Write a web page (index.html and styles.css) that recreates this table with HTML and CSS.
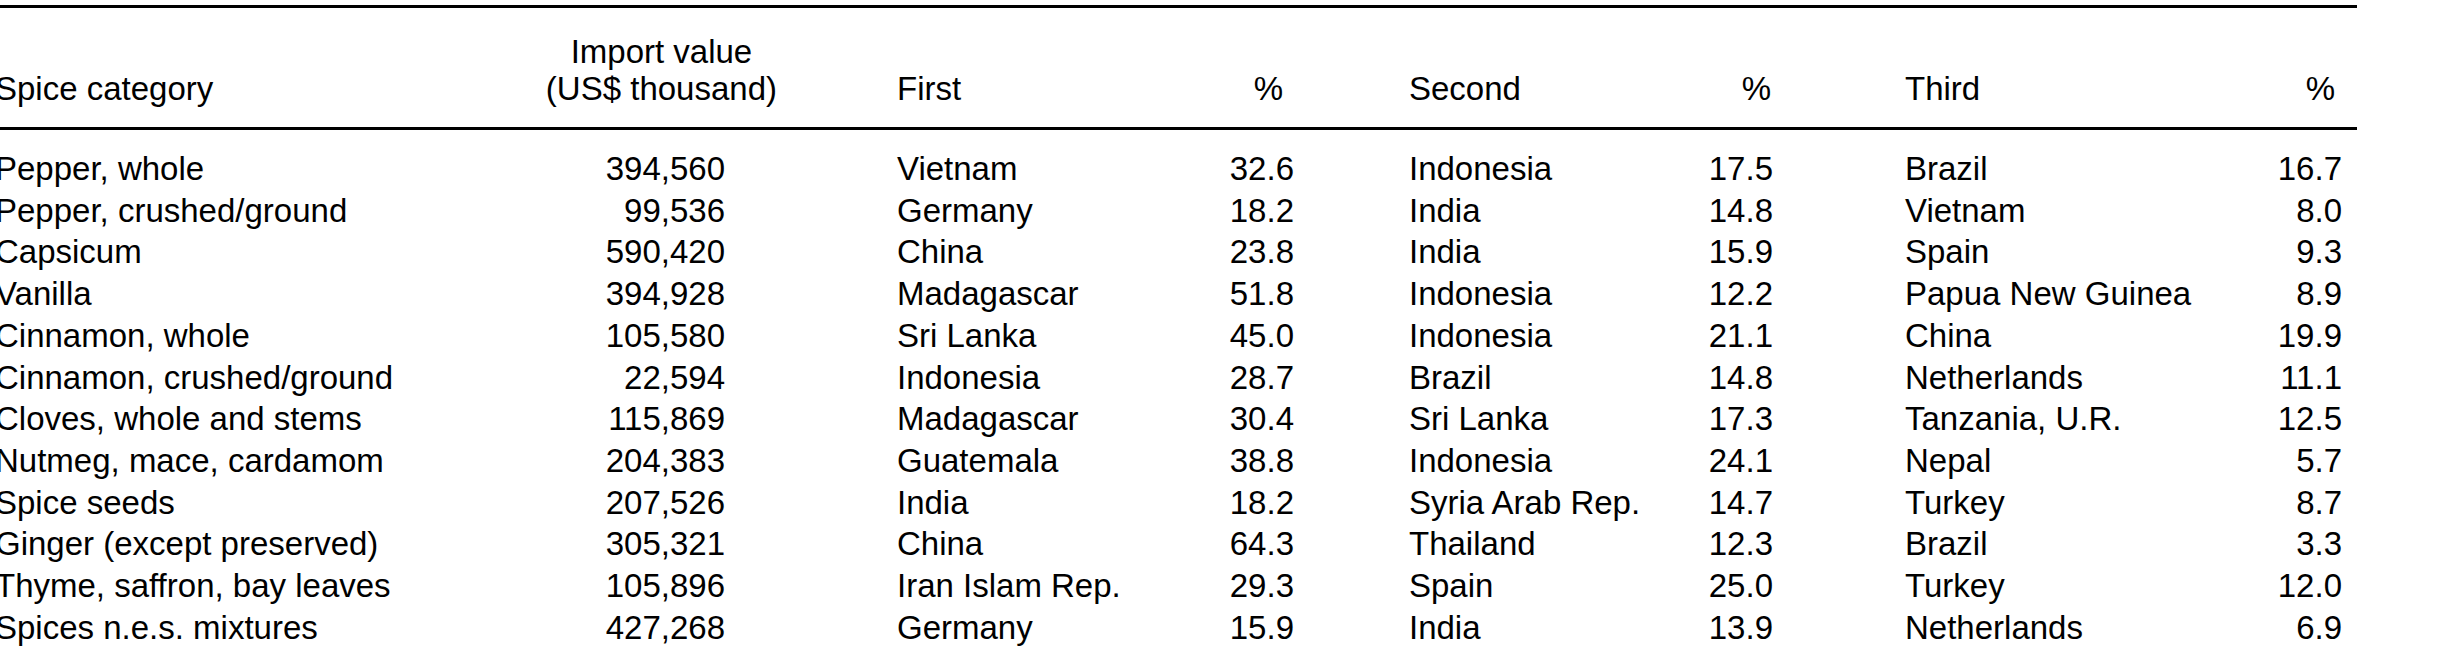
FILE: index.html
```html
<!DOCTYPE html>
<html lang="en">
<head>
<meta charset="utf-8">
<title>Spice imports</title>
<link rel="stylesheet" href="styles.css">
</head>
<body>
<table class="spice-table">
  <colgroup>
    <col class="c-cat"><col class="c-val"><col class="c-name1"><col class="c-pct1">
    <col class="c-name2"><col class="c-pct2"><col class="c-name3"><col class="c-pct3">
  </colgroup>
  <thead>
    <tr>
      <th class="cat">Spice category</th>
      <th class="val"><span class="val-head">Import value<br>(US$ thousand)</span></th>
      <th class="n1">First</th>
      <th class="p1">%</th>
      <th class="n2">Second</th>
      <th class="p2">%</th>
      <th class="n3">Third</th>
      <th class="p3">%</th>
    </tr>
  </thead>
  <tbody>
    <tr><td class="cat">Pepper, whole</td><td class="val">394,560</td><td class="n1">Vietnam</td><td class="p1">32.6</td><td class="n2">Indonesia</td><td class="p2">17.5</td><td class="n3">Brazil</td><td class="p3">16.7</td></tr>
    <tr><td class="cat">Pepper, crushed/ground</td><td class="val">99,536</td><td class="n1">Germany</td><td class="p1">18.2</td><td class="n2">India</td><td class="p2">14.8</td><td class="n3">Vietnam</td><td class="p3">8.0</td></tr>
    <tr><td class="cat">Capsicum</td><td class="val">590,420</td><td class="n1">China</td><td class="p1">23.8</td><td class="n2">India</td><td class="p2">15.9</td><td class="n3">Spain</td><td class="p3">9.3</td></tr>
    <tr><td class="cat">Vanilla</td><td class="val">394,928</td><td class="n1">Madagascar</td><td class="p1">51.8</td><td class="n2">Indonesia</td><td class="p2">12.2</td><td class="n3">Papua New Guinea</td><td class="p3">8.9</td></tr>
    <tr><td class="cat">Cinnamon, whole</td><td class="val">105,580</td><td class="n1">Sri Lanka</td><td class="p1">45.0</td><td class="n2">Indonesia</td><td class="p2">21.1</td><td class="n3">China</td><td class="p3">19.9</td></tr>
    <tr><td class="cat">Cinnamon, crushed/ground</td><td class="val">22,594</td><td class="n1">Indonesia</td><td class="p1">28.7</td><td class="n2">Brazil</td><td class="p2">14.8</td><td class="n3">Netherlands</td><td class="p3">11.1</td></tr>
    <tr><td class="cat">Cloves, whole and stems</td><td class="val">115,869</td><td class="n1">Madagascar</td><td class="p1">30.4</td><td class="n2">Sri Lanka</td><td class="p2">17.3</td><td class="n3">Tanzania, U.R.</td><td class="p3">12.5</td></tr>
    <tr><td class="cat">Nutmeg, mace, cardamom</td><td class="val">204,383</td><td class="n1">Guatemala</td><td class="p1">38.8</td><td class="n2">Indonesia</td><td class="p2">24.1</td><td class="n3">Nepal</td><td class="p3">5.7</td></tr>
    <tr><td class="cat">Spice seeds</td><td class="val">207,526</td><td class="n1">India</td><td class="p1">18.2</td><td class="n2">Syria Arab Rep.</td><td class="p2">14.7</td><td class="n3">Turkey</td><td class="p3">8.7</td></tr>
    <tr><td class="cat">Ginger (except preserved)</td><td class="val">305,321</td><td class="n1">China</td><td class="p1">64.3</td><td class="n2">Thailand</td><td class="p2">12.3</td><td class="n3">Brazil</td><td class="p3">3.3</td></tr>
    <tr><td class="cat">Thyme, saffron, bay leaves</td><td class="val">105,896</td><td class="n1">Iran Islam Rep.</td><td class="p1">29.3</td><td class="n2">Spain</td><td class="p2">25.0</td><td class="n3">Turkey</td><td class="p3">12.0</td></tr>
    <tr><td class="cat">Spices n.e.s. mixtures</td><td class="val">427,268</td><td class="n1">Germany</td><td class="p1">15.9</td><td class="n2">India</td><td class="p2">13.9</td><td class="n3">Netherlands</td><td class="p3">6.9</td></tr>
  </tbody>
</table>
</body>
</html>
```
FILE: styles.css
```css
html, body {
  margin: 0;
  padding: 0;
  background: #fff;
  overflow: hidden;
}

body {
  font-family: "Liberation Sans", Arial, Helvetica, sans-serif;
  font-size: 33px;
  color: #000;
}

.spice-table {
  table-layout: fixed;
  border-collapse: separate;
  border-spacing: 0;
  width: 2362px;
  margin: 5px 0 0 -5px;
}

.c-cat { width: 485px; }
.c-val { width: 310px; }
.c-name1 { width: 405px; }
.c-pct1 { width: 130px; }
.c-name2 { width: 270px; }
.c-pct2 { width: 210px; }
.c-name3 { width: 395px; }
.c-pct3 { width: 157px; }

th, td {
  padding: 0;
  white-space: nowrap;
  font-weight: normal;
}

thead th {
  border-top: 3px solid #000;
  border-bottom: 3px solid #000;
  box-sizing: content-box;
  vertical-align: bottom;
  line-height: 37px;
  padding-bottom: 20px;
  height: 99px;
}

tbody td {
  line-height: 41.7px;
}

tbody tr:first-child td {
  padding-top: 18px;
}

.cat { text-align: left; }
.val { text-align: right; padding-right: 65px; }
.n1 { text-align: left; padding-left: 107px; }
.n2 { text-align: left; padding-left: 84px; }
.n3 { text-align: left; padding-left: 100px; }
.p1 { text-align: right; padding-right: 31px; }
.p2 { text-align: right; padding-right: 32px; }
.p3 { text-align: right; padding-right: 15px; }

thead .val { padding-right: 13px; }
.val-head {
  display: inline-block;
  text-align: center;
}
thead .p1 { padding-right: 42px; }
thead .p2 { padding-right: 34px; }
thead .p3 { padding-right: 22px; }
```
